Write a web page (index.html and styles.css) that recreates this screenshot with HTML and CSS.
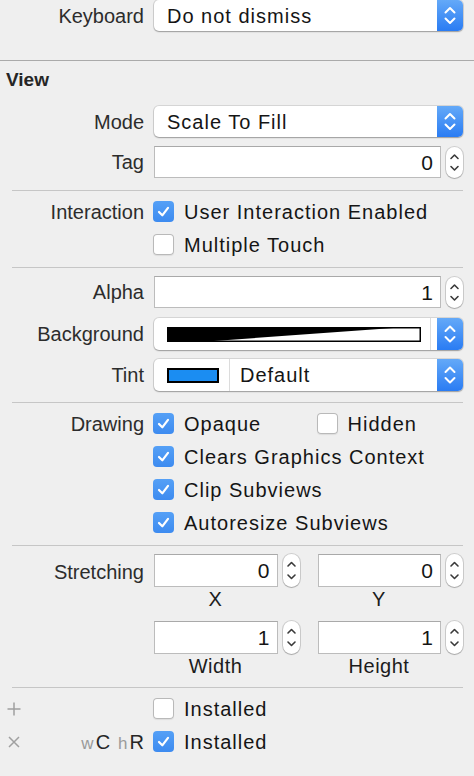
FILE: index.html
```html
<!DOCTYPE html>
<html>
<head>
<meta charset="utf-8">
<link rel="stylesheet" href="styles.css">
</head>
<body>
<div class="panel">
  <div class="row row-kb">
    <div class="label">Keyboard</div>
    <div class="popup">
      <span class="popup-text">Do not dismiss</span>
      <span class="popup-btn"><svg width="26" height="31" viewBox="0 0 26 31"><path d="M8.5 12.5 L13 8 L17.5 12.5 M8.5 18.5 L13 23 L17.5 18.5" fill="none" stroke="#fff" stroke-width="2" stroke-linecap="round" stroke-linejoin="round"/></svg></span>
    </div>
  </div>

  <div class="sep-full"></div>
  <div class="header">View</div>

  <div class="row row-mode">
    <div class="label">Mode</div>
    <div class="popup">
      <span class="popup-text">Scale To Fill</span>
      <span class="popup-btn"><svg width="26" height="31" viewBox="0 0 26 31"><path d="M8.5 12.5 L13 8 L17.5 12.5 M8.5 18.5 L13 23 L17.5 18.5" fill="none" stroke="#fff" stroke-width="2" stroke-linecap="round" stroke-linejoin="round"/></svg></span>
    </div>
  </div>
  <div class="row row-tag">
    <div class="label">Tag</div>
    <div class="numctl">
      <div class="field">0</div>
      <div class="stepper"><svg width="17" height="31" viewBox="0 0 17 31"><path d="M5 11.5 L8.5 8 L12 11.5 M5 19.5 L8.5 23 L12 19.5" fill="none" stroke="#3a3a3a" stroke-width="1.6" stroke-linecap="round" stroke-linejoin="round"/></svg></div>
    </div>
  </div>

  <div class="sep"></div>

  <div class="section sec-check">
    <div class="row checkrow">
      <div class="label">Interaction</div>
      <div class="check"><span class="box on"><svg width="21" height="21" viewBox="0 0 21 21"><path d="M6 11 L9.3 14.3 L15 6.8" fill="none" stroke="#fff" stroke-width="2.2" stroke-linecap="round" stroke-linejoin="round"/></svg></span><span class="ctext">User Interaction Enabled</span></div>
    </div>
    <div class="row checkrow">
      <div class="label"></div>
      <div class="check"><span class="box"></span><span class="ctext">Multiple Touch</span></div>
    </div>
  </div>

  <div class="sep"></div>

  <div class="section sec-color">
    <div class="row row-alpha">
      <div class="label">Alpha</div>
      <div class="numctl">
        <div class="field">1</div>
        <div class="stepper"><svg width="17" height="31" viewBox="0 0 17 31"><path d="M5 11.5 L8.5 8 L12 11.5 M5 19.5 L8.5 23 L12 19.5" fill="none" stroke="#3a3a3a" stroke-width="1.6" stroke-linecap="round" stroke-linejoin="round"/></svg></div>
      </div>
    </div>
    <div class="row row-bg">
      <div class="label">Background</div>
      <div class="popup popup-color">
        <span class="well well-bg"><svg width="254" height="15" viewBox="0 0 254 15"><rect x="0.75" y="0.75" width="252.5" height="13.5" fill="#fff" stroke="#000" stroke-width="1.5"/><polygon points="0,0 240,0 33,15 0,15" fill="#000"/></svg></span>
        <span class="divider"></span>
        <span class="popup-fill"></span>
        <span class="popup-btn"><svg width="26" height="32" viewBox="0 0 26 32"><path d="M8.5 13 L13 8.5 L17.5 13 M8.5 19 L13 23.5 L17.5 19" fill="none" stroke="#fff" stroke-width="2" stroke-linecap="round" stroke-linejoin="round"/></svg></span>
      </div>
    </div>
    <div class="row row-tint">
      <div class="label">Tint</div>
      <div class="popup popup-color">
        <span class="well well-tint"><svg width="52" height="15" viewBox="0 0 52 15"><rect x="1" y="1" width="50" height="13" fill="#1b8df2" stroke="#000" stroke-width="2"/></svg></span>
        <span class="divider divider-tint"></span>
        <span class="popup-text popup-text-tint">Default</span>
        <span class="popup-btn"><svg width="26" height="32" viewBox="0 0 26 32"><path d="M8.5 13 L13 8.5 L17.5 13 M8.5 19 L13 23.5 L17.5 19" fill="none" stroke="#fff" stroke-width="2" stroke-linecap="round" stroke-linejoin="round"/></svg></span>
      </div>
    </div>
  </div>

  <div class="sep"></div>

  <div class="section sec-check">
    <div class="row checkrow">
      <div class="label">Drawing</div>
      <div class="pair">
        <div class="check"><span class="box on"><svg width="21" height="21" viewBox="0 0 21 21"><path d="M6 11 L9.3 14.3 L15 6.8" fill="none" stroke="#fff" stroke-width="2.2" stroke-linecap="round" stroke-linejoin="round"/></svg></span><span class="ctext">Opaque</span></div>
        <div class="check"><span class="box"></span><span class="ctext">Hidden</span></div>
      </div>
    </div>
    <div class="row checkrow">
      <div class="label"></div>
      <div class="check"><span class="box on"><svg width="21" height="21" viewBox="0 0 21 21"><path d="M6 11 L9.3 14.3 L15 6.8" fill="none" stroke="#fff" stroke-width="2.2" stroke-linecap="round" stroke-linejoin="round"/></svg></span><span class="ctext">Clears Graphics Context</span></div>
    </div>
    <div class="row checkrow">
      <div class="label"></div>
      <div class="check"><span class="box on"><svg width="21" height="21" viewBox="0 0 21 21"><path d="M6 11 L9.3 14.3 L15 6.8" fill="none" stroke="#fff" stroke-width="2.2" stroke-linecap="round" stroke-linejoin="round"/></svg></span><span class="ctext">Clip Subviews</span></div>
    </div>
    <div class="row checkrow">
      <div class="label"></div>
      <div class="check"><span class="box on"><svg width="21" height="21" viewBox="0 0 21 21"><path d="M6 11 L9.3 14.3 L15 6.8" fill="none" stroke="#fff" stroke-width="2.2" stroke-linecap="round" stroke-linejoin="round"/></svg></span><span class="ctext">Autoresize Subviews</span></div>
    </div>
  </div>

  <div class="sep"></div>

  <div class="section sec-stretch">
    <div class="row row-stretch">
      <div class="label lbl-top">Stretching</div>
      <div class="pair">
        <div class="numcol">
          <div class="numctl">
            <div class="field">0</div>
            <div class="stepper"><svg width="17" height="33" viewBox="0 0 17 33"><path d="M5 12 L8.5 8.5 L12 12 M5 21 L8.5 24.5 L12 21" fill="none" stroke="#3a3a3a" stroke-width="1.6" stroke-linecap="round" stroke-linejoin="round"/></svg></div>
          </div>
          <div class="sublabel">X</div>
        </div>
        <div class="numcol">
          <div class="numctl">
            <div class="field">0</div>
            <div class="stepper"><svg width="17" height="33" viewBox="0 0 17 33"><path d="M5 12 L8.5 8.5 L12 12 M5 21 L8.5 24.5 L12 21" fill="none" stroke="#3a3a3a" stroke-width="1.6" stroke-linecap="round" stroke-linejoin="round"/></svg></div>
          </div>
          <div class="sublabel">Y</div>
        </div>
      </div>
    </div>
    <div class="row row-stretch row-stretch2">
      <div class="label"></div>
      <div class="pair">
        <div class="numcol">
          <div class="numctl">
            <div class="field">1</div>
            <div class="stepper"><svg width="17" height="33" viewBox="0 0 17 33"><path d="M5 12 L8.5 8.5 L12 12 M5 21 L8.5 24.5 L12 21" fill="none" stroke="#3a3a3a" stroke-width="1.6" stroke-linecap="round" stroke-linejoin="round"/></svg></div>
          </div>
          <div class="sublabel">Width</div>
        </div>
        <div class="numcol">
          <div class="numctl">
            <div class="field">1</div>
            <div class="stepper"><svg width="17" height="33" viewBox="0 0 17 33"><path d="M5 12 L8.5 8.5 L12 12 M5 21 L8.5 24.5 L12 21" fill="none" stroke="#3a3a3a" stroke-width="1.6" stroke-linecap="round" stroke-linejoin="round"/></svg></div>
          </div>
          <div class="sublabel">Height</div>
        </div>
      </div>
    </div>
  </div>

  <div class="sep"></div>

  <div class="section sec-install">
    <div class="row checkrow installrow">
      <div class="label lbl-install">
        <svg class="opicon" width="16" height="16" viewBox="0 0 16 16"><path d="M8 1.5 V14.5 M1.5 8 H14.5" stroke="#a0a0a0" stroke-width="1.5" fill="none"/></svg>
        <span></span>
      </div>
      <div class="check"><span class="box"></span><span class="ctext">Installed</span></div>
    </div>
    <div class="row checkrow installrow">
      <div class="label lbl-install">
        <svg class="opicon" width="16" height="16" viewBox="0 0 16 16"><path d="M3 3 L13 13 M13 3 L3 13" stroke="#a0a0a0" stroke-width="1.5" fill="none"/></svg>
        <span class="size"><span class="sz-small">w</span><span class="sz-big sz-gap">C</span><span class="sz-small">h</span><span class="sz-big">R</span></span>
      </div>
      <div class="check"><span class="box on"><svg width="21" height="21" viewBox="0 0 21 21"><path d="M6 11 L9.3 14.3 L15 6.8" fill="none" stroke="#fff" stroke-width="2.2" stroke-linecap="round" stroke-linejoin="round"/></svg></span><span class="ctext">Installed</span></div>
    </div>
  </div>
</div>
</body>
</html>
```

FILE: styles.css
```css
* { box-sizing: border-box; }

html, body {
  margin: 0;
  padding: 0;
  background: #efefef;
}

body {
  font-family: "Liberation Sans", Arial, sans-serif;
  font-size: 20px;
  color: #1c1c1c;
  width: 474px;
  height: 776px;
  overflow: hidden;
}

.panel {
  display: flex;
  flex-direction: column;
}

.row {
  display: grid;
  grid-template-columns: 144px 309px;
  column-gap: 10px;
  align-items: center;
}

.label {
  text-align: right;
  color: #2c2c2c;
  white-space: nowrap;
  padding-top: 1px;
}

/* popups */
.popup {
  position: relative;
  display: flex;
  align-items: center;
  height: 31px;
  background: #fff;
  border-radius: 5px;
  box-shadow: 0 0 0 1px rgba(0,0,0,0.10), 0 1px 1.5px rgba(0,0,0,0.28);
  overflow: hidden;
}

.popup-text {
  flex: 1;
  padding-left: 13px;
  padding-top: 1px;
  letter-spacing: 1px;
  color: #151515;
  white-space: nowrap;
}

.popup-btn {
  align-self: stretch;
  width: 26px;
  flex: none;
  display: flex;
  align-items: center;
  justify-content: center;
  background: linear-gradient(#64a9f8, #2a7cf3);
}

.popup-btn svg { display: block; }

.row-kb .popup { height: 31px; }
.row-mode { margin-top: 9px; }
.row-tag { margin-top: 9px; }

.header {
  height: 36px;
  line-height: 37px;
  padding-left: 6px;
  font-weight: bold;
  font-size: 19px;
  color: #262626;
}

.sep-full {
  margin-top: 29px;
  height: 1px;
  background: #aaaaaa;
}

.sep {
  margin-left: 12px;
  width: 451px;
  height: 1px;
  background: #c6c6c6;
}

.row-tag { margin-bottom: 12px; }

/* number fields */
.numctl {
  display: flex;
  align-items: center;
  gap: 5px;
}

.field {
  flex: 1;
  height: 32px;
  background: #fff;
  border: 1px solid #bcbcbc;
  border-top-color: #a9a9a9;
  text-align: right;
  padding-right: 7px;
  line-height: 31px;
  font-size: 21px;
  color: #151515;
}

.stepper {
  flex: none;
  width: 17px;
  height: 31px;
  background: #fff;
  border-radius: 9px;
  box-shadow: 0 0 0 1px rgba(0,0,0,0.14), 0 1px 1px rgba(0,0,0,0.18);
  display: flex;
  align-items: center;
  justify-content: center;
  overflow: hidden;
}

.stepper svg { display: block; }

/* checkboxes */
.section { display: flex; flex-direction: column; }

.sec-check { padding: 4px 0 6px; }

.checkrow { height: 33px; }

.check {
  display: flex;
  align-items: center;
  gap: 10px;
  margin-left: -1px;
}

.box {
  flex: none;
  width: 21px;
  height: 21px;
  border-radius: 4px;
  background: #fff;
  box-shadow: inset 0 0 0 1px #b9b9b9, 0 1px 1px rgba(0,0,0,0.08);
  display: flex;
}

.box.on {
  background: linear-gradient(#55a0f6, #3d8bf0);
  box-shadow: none;
}

.box svg { display: block; }

.ctext {
  letter-spacing: 1px;
  color: #151515;
  white-space: nowrap;
  padding-top: 1px;
}

.pair {
  display: grid;
  grid-template-columns: 1fr 1fr;
  column-gap: 18px;
}

/* color section */
.sec-color { padding: 8px 0 11px; }

.row-bg { margin-top: 10px; }
.row-tint { margin-top: 9px; }

.popup-color { height: 32px; }

.well {
  flex: none;
  display: flex;
  padding-left: 13px;
}

.well svg { display: block; }

.well-bg { width: 276px; }

.divider {
  flex: none;
  align-self: stretch;
  width: 1px;
  background: #dcdcdc;
}

.popup-fill { flex: 1; }

.well-tint { width: 75px; }

.popup-text-tint { padding-left: 10px; }

/* stretching */
.sec-stretch { padding: 8px 0 11px; }

.row-stretch { align-items: start; }
.row-stretch2 { margin-top: 12px; }

.row-stretch .field { height: 33px; line-height: 32px; }
.row-stretch .stepper { height: 33px; }

.lbl-top { line-height: 35px; }

.numcol {
  display: flex;
  flex-direction: column;
}

.sublabel {
  height: 22px;
  line-height: 24px;
  width: 123px;
  text-align: center;
  color: #1c1c1c;
  letter-spacing: 0.5px;
}

/* installed */
.sec-install { padding-top: 4px; }

.lbl-install {
  display: flex;
  align-items: center;
  justify-content: space-between;
  padding-left: 6px;
}

.opicon { display: block; }

.size { letter-spacing: 0; white-space: nowrap; }

.sz-small {
  color: #9a9a9a;
  font-size: 17px;
  margin-right: 2px;
}

.sz-big {
  color: #262626;
  font-size: 20px;
}

.sz-gap { margin-right: 8px; }
```
